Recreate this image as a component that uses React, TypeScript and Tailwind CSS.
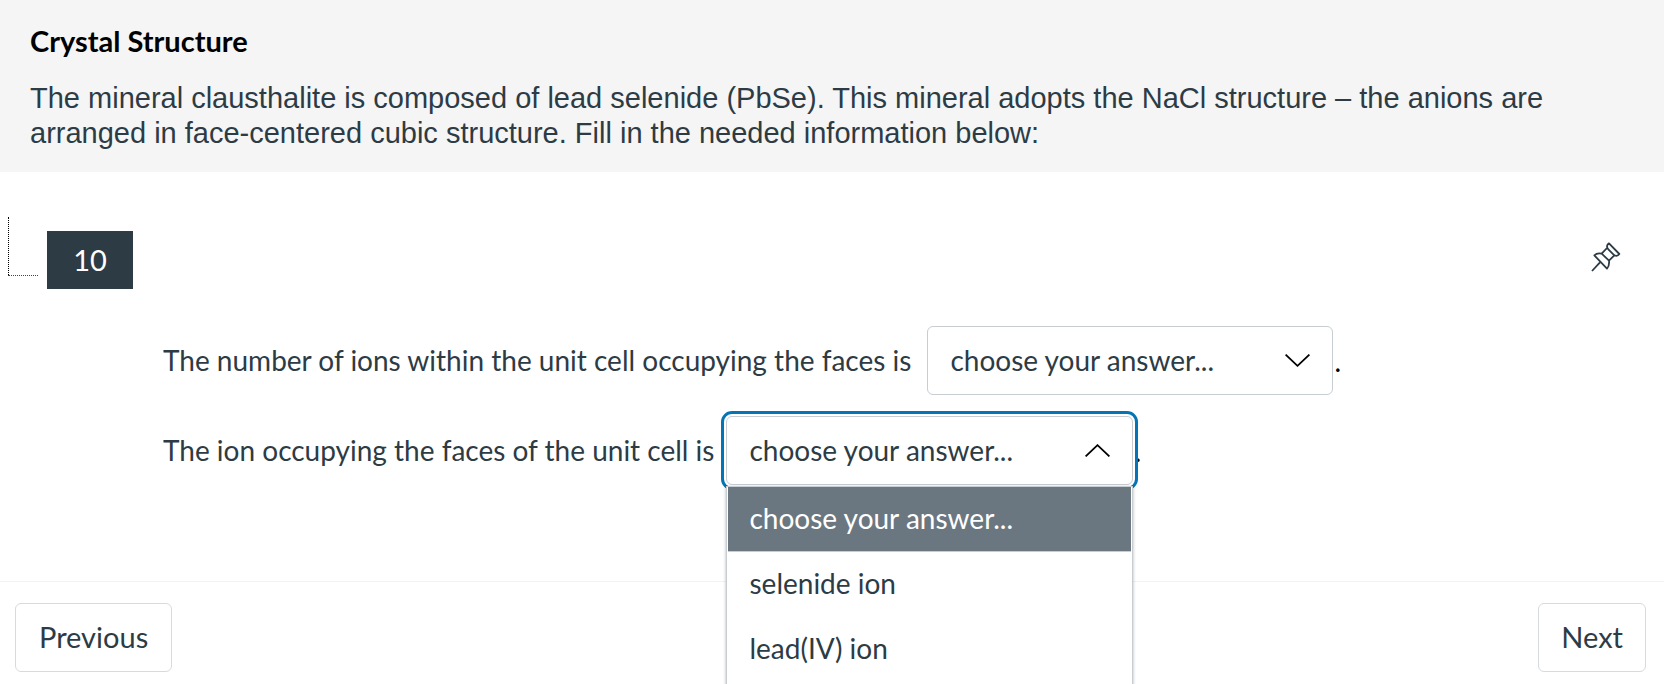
import React, { useState } from 'react';

const faceCounts = ['choose your answer...', '2', '3', '4', '6'];
const ions = ['choose your answer...', 'selenide ion', 'lead(IV) ion'];

function Chevron({ up = false }: { up?: boolean }) {
  return (
    <svg
      className="pointer-events-none absolute top-1/2 right-[23px] -mt-[7px] h-[13px] w-[25px]"
      viewBox="0 0 25 13"
      fill="none"
      stroke="#000"
      strokeWidth="1.8"
      aria-hidden="true"
    >
      <path d={up ? 'M0.6 12.4 12.5 1.2 24.4 12.4' : 'M0.6 0.6 12.5 11.8 24.4 0.6'} />
    </svg>
  );
}

// Thumbtack outline, used for "pin this question"
function PinIcon() {
  return (
    <svg className="h-[30px] w-[30px]" viewBox="95 64 90 90" fill="none" stroke="#2d3b45" strokeWidth="5.4" strokeLinejoin="round" aria-hidden="true">
      <path d="M149 68 180 100C175 107 168 107 162 101L147 86C141 80 142 73 149 68Z" />
      <path d="M143 82 127 99M165 104 149 120" />
      <path d="M105 104C111 98 119 97 127 99L149 120C150 129 149 138 143 144Z" />
      <path d="M122 125 98 151" />
    </svg>
  );
}

const selectClass =
  'block h-[69px] w-full appearance-none rounded-md border border-[#c7cdd1] bg-white pr-16 pb-px pl-[22px] text-[28px] text-[#2d3b45] outline-none';

export default function App() {
  const [count, setCount] = useState(faceCounts[0]);
  const [ion, setIon] = useState(ions[0]);
  const [open, setOpen] = useState(true);

  const pickIon = (value: string) => {
    setIon(value);
    setOpen(false);
  };

  return (
    <div className="flex h-screen flex-col overflow-hidden bg-white font-['Lato',sans-serif] text-[29px] text-[#2d3b45]">
      <header className="bg-[#f5f5f5] px-[30px] pt-[23px] pb-[21px]">
        <h1 className="leading-9 font-bold text-black">Crystal Structure</h1>
        <p className="mt-[22px] font-['Liberation_Sans',sans-serif] leading-[35px]">
          The mineral clausthalite is composed of lead selenide (PbSe). This mineral adopts the NaCl structure – the
          anions are arranged in face-centered cubic structure. Fill in the needed information below:
        </p>
      </header>

      <main className="flex-1 pt-[45px]">
        <div className="flex items-start pr-[43px] pl-2">
          {/* dotted connector from the stimulus down to its question */}
          <div className="flex h-[59px] w-[30px] flex-col">
            <div className="flex-1 border-l border-dotted border-black" />
            <div className="border-b border-dotted border-[#444]" />
          </div>
          <div className="mt-[14px] ml-[9px] flex h-[58px] w-[86px] items-center justify-center bg-[#2d3b45] text-white">
            10
          </div>
          <button type="button" className="mt-[25px] ml-auto" aria-label="Pin question">
            <PinIcon />
          </button>
        </div>

        <div className="mt-[37px] flex flex-col gap-[21px] pl-[163px] text-[28px]">
          <div className="flex items-center">
            <label htmlFor="face-count" className="pb-[2px]">
              The number of ions within the unit cell occupying the faces is
            </label>
            <div className="relative ml-4 w-[406px]">
              <select id="face-count" className={selectClass} value={count} onChange={(e) => setCount(e.target.value)}>
                {faceCounts.map((item) => (
                  <option key={item}>{item}</option>
                ))}
              </select>
              <Chevron />
            </div>
            <span className="ml-px text-black">.</span>
          </div>

          <div className="flex items-center">
            <label htmlFor="face-ion" className="pb-[2px]">
              The ion occupying the faces of the unit cell is
            </label>
            <div className="relative z-10 ml-3 w-[407px]">
              <select
                id="face-ion"
                className={`${selectClass} ${open ? 'outline-3 outline-offset-2 outline-[#0374b5] outline-solid' : ''}`}
                value={ion}
                onMouseDown={(e) => {
                  e.preventDefault();
                  setOpen(!open);
                }}
                onChange={(e) => setIon(e.target.value)}
              >
                {ions.map((item) => (
                  <option key={item}>{item}</option>
                ))}
              </select>
              <Chevron up={open} />
              {open && (
                <ul
                  role="listbox"
                  aria-label="Answers"
                  className="absolute top-[70px] left-0 w-full border border-[#c7cdd1] bg-white px-px pb-6 shadow-[0_1px_3px_rgba(0,0,0,0.3)]"
                >
                  {ions.map((item) => (
                    <li
                      key={item}
                      role="option"
                      aria-selected={item === ion}
                      onClick={() => pickIon(item)}
                      className={`flex h-[65px] items-center border-b pb-[2px] pl-[21px] ${
                        item === ion ? 'border-[#c7cdd1] bg-[#6b7780] text-white' : 'border-transparent'
                      }`}
                    >
                      {item}
                    </li>
                  ))}
                </ul>
              )}
            </div>
            <span className="ml-px text-black">.</span>
          </div>
        </div>
      </main>

      <footer className="flex justify-between border-t border-[#f2f2f2] pt-[21px] pr-[18px] pb-3 pl-[15px]">
        <button type="button" className="h-[69px] rounded-md border border-[#d7dade] px-[23px] pb-[2px]">
          Previous
        </button>
        <button type="button" className="h-[69px] rounded-md border border-[#d7dade] px-[22px] pb-[2px]">
          Next
        </button>
      </footer>
    </div>
  );
}
